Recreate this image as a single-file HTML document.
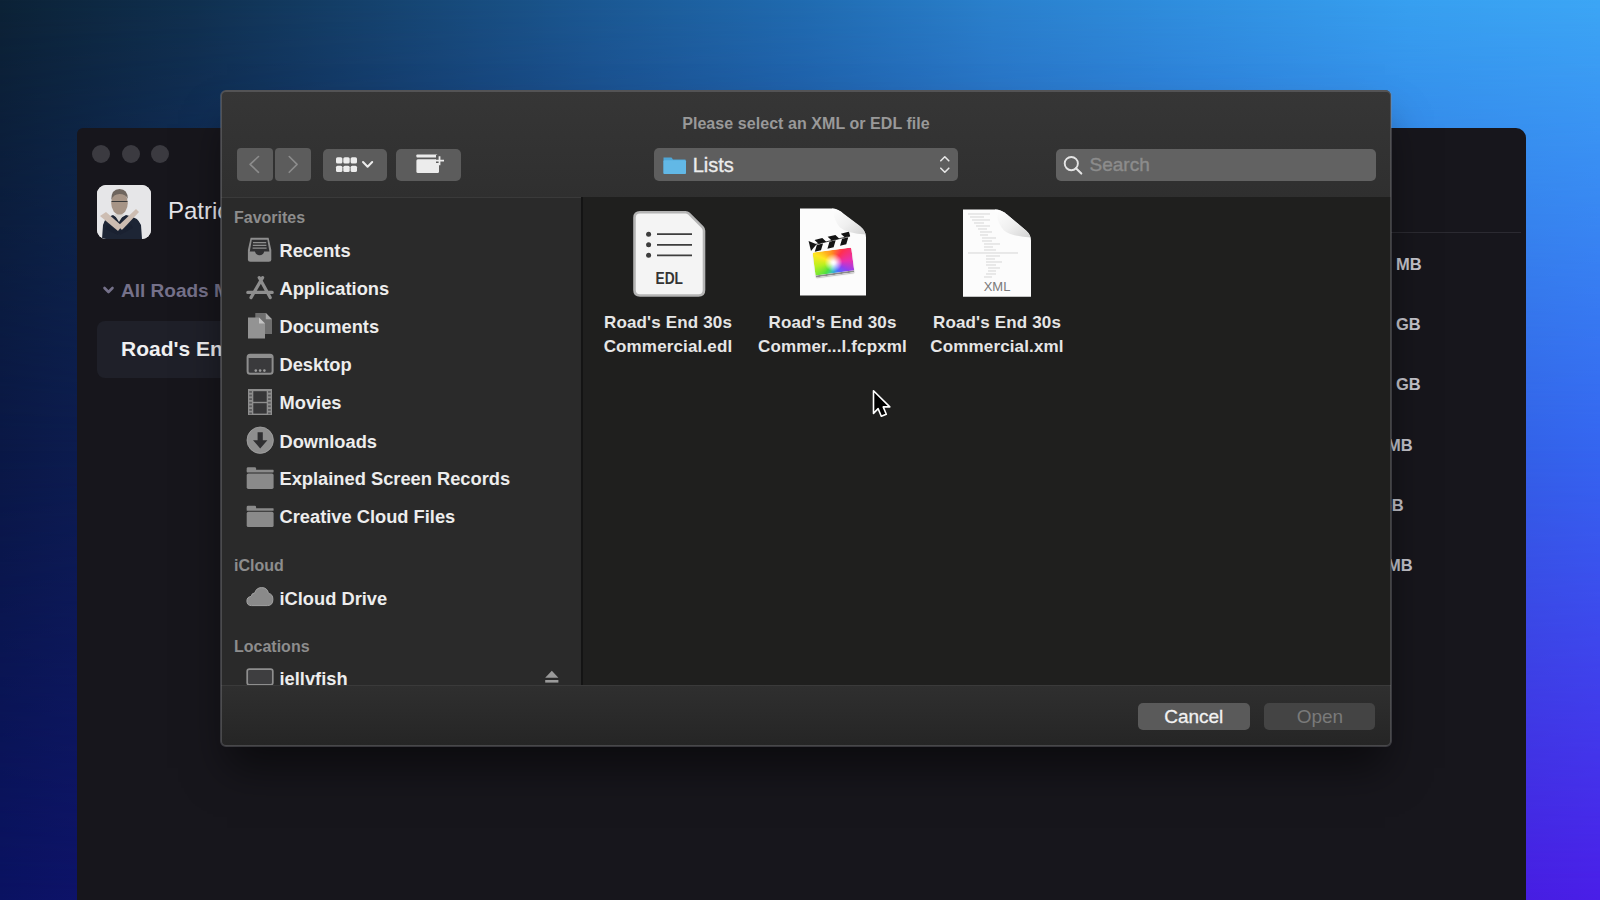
<!DOCTYPE html>
<html><head><meta charset="utf-8">
<style>
*{margin:0;padding:0;box-sizing:border-box}
html,body{width:1600px;height:900px;overflow:hidden}
body{position:relative;font-family:"Liberation Sans",sans-serif;
background:#0c1a33;}
.abs{position:absolute}
#bg1{left:0;top:0;width:1600px;height:900px;
background:linear-gradient(90deg,#0c2236 0%,#10304f 12%,#164572 25%,#1b5892 37%,#206bb0 50%,#2a80cc 62%,#3090e0 75%,#37a0f0 88%,#3ca6f5 100%);}
#bg2{left:0;top:0;width:1600px;height:900px;
background:linear-gradient(90deg,#0a1846 0%,#3565f0 100%);
-webkit-mask-image:linear-gradient(180deg,transparent 0%,#000 50%,#000 100%);}
#bg3{left:0;top:0;width:1600px;height:900px;
background:linear-gradient(90deg,#0a1262 0%,#4a1ee8 100%);
-webkit-mask-image:linear-gradient(180deg,transparent 50%,#000 100%);}
#win{left:77px;top:128px;width:1449px;height:800px;background:#17161c;border-radius:6px 10px 0 0;}
.tl{width:18px;height:18px;border-radius:50%;background:#3b3a40;top:145px}
#dlg{left:221px;top:90px;width:1170px;height:656px;border-radius:6px;
box-shadow:0 28px 40px -6px rgba(0,0,0,.5);overflow:hidden;background:#2e2e2e}
#tb{left:0;top:0;width:1170px;height:107px;background:linear-gradient(#363636,#2f2f2f);}
#side{left:0;top:107px;width:360px;height:488px;background:#2a2a2a;border-top:1px solid #3a3a3a}
#files{left:362px;top:107px;width:808px;height:488px;background:#1f1f1e}
#divv{left:360px;top:107px;width:2px;height:488px;background:#141414}
#foot{left:0;top:595px;width:1170px;height:61px;background:linear-gradient(#2f2f2f,#252525);border-top:1px solid #3a3a3a}
.bgt{font-size:16.5px;line-height:16.5px;font-weight:700;color:#c4c4cc;white-space:nowrap}
.btn{background:#5c5c5c;border-radius:6px;}
.sh{color:#8d8d8d;font-size:16px;line-height:16px;font-weight:700;left:13px}
.si{color:#ededed;font-size:18.3px;line-height:19.5px;font-weight:700;left:58.5px;margin-top:0.4px;white-space:nowrap}
.ft{color:#e6e6e6;font-size:17px;font-weight:700;letter-spacing:0.15px;text-align:center;white-space:nowrap;line-height:23.5px}
</style></head><body>
<div id="bg1" class="abs"></div>
<div id="bg2" class="abs"></div>
<div id="bg3" class="abs"></div>

<div id="win" class="abs"></div>
<div class="abs" style="left:97px;top:185px;width:54px;height:54px;border-radius:9px;overflow:hidden;background:#e9e9ea">
  <svg width="54" height="54" viewBox="97 185 54 54">
    <rect x="97" y="185" width="54" height="54" fill="#e6e6e8"/>
    <path d="M102 239l1-14q2-8 10-10l6 4l7-4q12 2 15 10l1 14z" fill="#1d2535"/>
    <path d="M114 214l5 8l5-8z" fill="#d8d4d0"/>
    <ellipse cx="119.5" cy="203" rx="8.3" ry="11.5" fill="#a69486"/>
    <path d="M111.2 200q0-11 8.3-11q8.3 0 8.3 10q-2-5-8.3-5q-6 0-8.3 6z" fill="#6e655e"/>
    <path d="M111.5 201.5h16" stroke="#3a3a3a" stroke-width="1"/>
    <path d="M100 216l6-4l16 14l-4 5z" fill="#cdbdb2"/>
    <path d="M136 209l3 3l-17 18l-4-4z" fill="#cdbdb2"/>
    <path d="M107 225l12 7l-1 3l-13-6zM131 224l-12 8l1 3l13-7z" fill="#1a2131"/>
  </svg>
</div>
<div class="abs" style="left:168px;top:198.7px;font-size:24px;line-height:24px;color:#e6e6ea;white-space:nowrap">Patrick</div>
<svg class="abs" style="left:0;top:0" width="240" height="320" viewBox="0 0 240 320">
  <polyline points="104.5,288 108.5,292 112.5,288" fill="none" stroke="#75718a" stroke-width="2.6" stroke-linecap="round" stroke-linejoin="round"/>
</svg>
<div class="abs" style="left:121px;top:281px;font-size:19px;line-height:19px;font-weight:700;color:#75718a;white-space:nowrap">All Roads Media</div>
<div class="abs" style="left:97px;top:321px;width:300px;height:57px;border-radius:8px;background:#1f2029"></div>
<div class="abs" style="left:121px;top:337.5px;font-size:21px;line-height:22px;color:#f0f0f2;font-weight:700;white-space:nowrap">Road's End</div>
<div class="abs" style="left:1391px;top:231.5px;width:130px;height:1.5px;background:#2b2a31"></div>
<div class="abs bgt" style="left:1396px;top:256.2px">MB</div>
<div class="abs bgt" style="left:1396px;top:316.2px">GB</div>
<div class="abs bgt" style="left:1396px;top:376.2px">GB</div>
<div class="abs bgt" style="left:1387px;top:436.6px">MB</div>
<div class="abs bgt" style="left:1379px;top:496.5px">GB</div>
<div class="abs bgt" style="left:1387px;top:556.9px">MB</div>
<div class="abs tl" style="left:92px"></div>
<div class="abs tl" style="left:122px"></div>
<div class="abs tl" style="left:151px"></div>

<div id="dlg" class="abs">
  <div id="tb" class="abs">
    <div class="abs" style="left:0;top:25.8px;width:1170px;text-align:center;font-size:16px;line-height:16px;font-weight:700;letter-spacing:0.06px;color:#999999">Please select an XML or EDL file</div>
    <div class="abs btn" style="left:15.5px;top:58.4px;width:36.2px;height:32.3px;border-radius:4px"></div>
    <div class="abs btn" style="left:54px;top:58.4px;width:36px;height:32.3px;border-radius:4px"></div>
    <svg class="abs" style="left:0;top:0" width="400" height="107" viewBox="221 90 400 107">
      <polyline points="258.5,156.5 250.1,164.4 258.5,172.3" fill="none" stroke="#8c8c8c" stroke-width="1.6" stroke-linecap="round" stroke-linejoin="round"/>
      <polyline points="289.2,156.5 297.1,164.4 289.2,172.3" fill="none" stroke="#8c8c8c" stroke-width="1.6" stroke-linecap="round" stroke-linejoin="round"/>
    </svg>
    <div class="abs btn" style="left:101.7px;top:58.5px;width:64.5px;height:32px;border-radius:5px"></div>
    <div class="abs btn" style="left:175.3px;top:58.5px;width:64.3px;height:32px;border-radius:5px"></div>
    <svg class="abs" style="left:0;top:0" width="400" height="107" viewBox="221 90 400 107">
      <g fill="#ececec">
        <rect x="336" y="157.2" width="6.4" height="6.4" rx="1.6"/><rect x="343.3" y="157.2" width="6.4" height="6.4" rx="1.6"/><rect x="350.6" y="157.2" width="6.4" height="6.4" rx="1.6"/>
        <rect x="336" y="165.7" width="6.4" height="6.4" rx="1.6"/><rect x="343.3" y="165.7" width="6.4" height="6.4" rx="1.6"/><rect x="350.6" y="165.7" width="6.4" height="6.4" rx="1.6"/>
      </g>
      <polyline points="363,162 367.6,166.8 372.2,162" fill="none" stroke="#ececec" stroke-width="2" stroke-linecap="round" stroke-linejoin="round"/>
      <g fill="#ececec">
        <rect x="416.4" y="154.5" width="21" height="3" rx="0.8"/>
        <rect x="416.4" y="159.2" width="22.6" height="13.8" rx="1.5"/>
      </g>
      <rect x="436" y="155" width="8" height="8" fill="#5c5c5c"/>
      <path d="M439.5 156.2v9M435 160.7h9" stroke="#ececec" stroke-width="1.8"/>
    </svg>
    <div class="abs btn" style="left:433.4px;top:58.4px;width:303.3px;height:32.3px;border-radius:5px;background:#5e5e5e"></div>
    <svg class="abs" style="left:0;top:0" width="1170" height="107" viewBox="221 90 1170 107">
      <path d="M663.5 157.5h8l1.5 2h12.5v13.6q0 1-1 1h-20q-1 0-1-1z" fill="#4fa6d6"/>
      <rect x="663.5" y="160.2" width="22.5" height="13.8" rx="1" fill="#62b8e6"/>
      <polyline points="940.8,160.8 944.8,156.8 948.8,160.8" fill="none" stroke="#e6e6e6" stroke-width="1.6" stroke-linecap="round" stroke-linejoin="round"/>
      <polyline points="940.8,168.2 944.8,172.2 948.8,168.2" fill="none" stroke="#e6e6e6" stroke-width="1.6" stroke-linecap="round" stroke-linejoin="round"/>
    </svg>
    <div class="abs" style="left:471.7px;top:65.2px;font-size:20px;line-height:20px;color:#ececec;-webkit-text-stroke:0.35px #ececec">Lists</div>
    <div class="abs btn" style="left:834.8px;top:58.6px;width:320px;height:32.2px;border-radius:5px;background:#626262"></div>
    <svg class="abs" style="left:0;top:0" width="1170" height="107" viewBox="221 90 1170 107">
      <circle cx="1071.3" cy="163.6" r="6.6" fill="none" stroke="#e4e4e4" stroke-width="1.9"/>
      <path d="M1076 168.3l5.3 5.3" stroke="#e4e4e4" stroke-width="2.1" stroke-linecap="round"/>
    </svg>
    <div class="abs" style="left:868.5px;top:64.8px;font-size:19px;line-height:20px;color:#8c8c8c;-webkit-text-stroke:0.4px #8c8c8c">Search</div>
  </div>
  <div id="side" class="abs"></div>
  <div id="divv" class="abs"></div>
  <div id="files" class="abs"></div>
  <svg class="abs" style="left:0;top:0" width="1170" height="656" viewBox="221 90 1170 656">
    <!-- EDL -->
    <path d="M640 212.2h45.5q2 0 3.5 1.5l13.5 13.5q1.5 1.5 1.5 3.5v59.3q0 5.5-5.5 5.5h-58.5q-5.5 0-5.5-5.5v-72.3q0-5.5 5.5-5.5z" fill="#f4f4f4" stroke="#b4b4b4" stroke-width="2.6"/>
        <g fill="#3d3d3d"><circle cx="648.6" cy="234.2" r="2.5"/><circle cx="648.6" cy="244.8" r="2.5"/><circle cx="648.6" cy="255.3" r="2.5"/></g>
    <g stroke="#3d3d3d" stroke-width="1.7"><path d="M657 234.2h35M657 244.8h35M657 255.3h35"/></g>
    <text x="655.5" y="284.2" font-family="Liberation Sans" font-size="16.5" font-weight="700" fill="#333333" textLength="27.5" lengthAdjust="spacingAndGlyphs">EDL</text>
    <!-- FCP page -->
    <defs>
      <linearGradient id="curl" x1="0" y1="0" x2="1" y2="1">
        <stop offset="0" stop-color="#ffffff"/><stop offset="0.5" stop-color="#efefef"/><stop offset="1" stop-color="#cfcfcf"/>
      </linearGradient>
    </defs>
    <path d="M800 208.5h32q6 0 12 6l16 12q6 5 6 11v57.9h-66z" fill="#fcfcfc"/>
    <path d="M832 208.5q3 14 8 19q7 6 26 7v2.5q0-6-6-11l-16-12q-6-5.5-12-5.5z" fill="url(#curl)"/>
    <!-- XML page -->
    <path d="M963 209.4h32q6 0 12 5l19 16q5 4.5 5 10v56.3h-68z" fill="#fcfcfc"/>
    <path d="M995 209.4q3 15 9 21q7 6 27 7v3q0-5.5-5-10l-19-16q-6-5-12-5z" fill="url(#curl)"/>
    <g stroke="#c4c4c4" stroke-width="0.7">
      <path d="M968 214h22M970 217h14M972 220h18M974 223h10M976 226h14M978 229h9M980 232h12M980 235h8M982 238h14M982 241h10M984 244h16M984 247h9M984 250h12M968 253h50M986 256h14M986 259h9M986 262h16M986 265h10M988 268h12M988 271h8M986 274h10M984 277h8"/>
    </g>
    <text x="997" y="291.4" text-anchor="middle" font-family="Liberation Sans" font-size="13" fill="#7a7a7a">XML</text>
  </svg>
  <svg class="abs" style="left:0;top:0" width="1170" height="656" viewBox="221 90 1170 656">
    <g transform="translate(1.5 4) rotate(-13.5 810 247)">
      <path d="M811 241.5h40" stroke="#2a2a2a" stroke-width="0.8"/>
      <path d="M815.5 237h8l3 4.5h-8zM829 237h8l3 4.5h-8zM842.5 237h8l0.5 0.8v3.7h-5.5z" fill="#141414"/>
      <path d="M809.5 236.5l7 5l-7 5.5z" fill="#141414"/>
      <path d="M813 248.5l3.6-6.2h6.4l-3.6 6.2zM826 248.5l3.6-6.2h6.4l-3.6 6.2zM839 248.5l3.6-6.2h6.4l-3.6 6.2z" fill="#141414"/>
    </g>
  </svg>
  <div class="abs" style="left:592.7px;top:160px;width:38.5px;height:25px;transform:rotate(-7.5deg);border-radius:1.5px;border-bottom:2px solid #8a8a8a;box-shadow:0 1px 1px rgba(0,0,0,.25);background:radial-gradient(circle at 50% 55%,#ffffff 0,rgba(255,255,255,.9) 8%,rgba(255,255,255,0) 38%),conic-gradient(from 0deg at 50% 55%,#ff8a20,#ff3050 45deg,#e830b0 90deg,#9040f0 125deg,#4a70ff 160deg,#38c0c0 195deg,#50e040 225deg,#b8f020 265deg,#ffe820 300deg,#ffb020 330deg,#ff8a20 360deg)"></div>
  <div class="abs ft" style="left:347px;top:221.4px;width:200px">Road's End 30s<br>Commercial.edl</div>
  <div class="abs ft" style="left:511.5px;top:221.4px;width:200px">Road's End 30s<br>Commer...l.fcpxml</div>
  <div class="abs ft" style="left:676px;top:221.4px;width:200px">Road's End 30s<br>Commercial.xml</div>
  <svg class="abs" style="left:0;top:0" width="1170" height="656" viewBox="221 90 1170 656">
    <path d="M873.5 390.8v22.6l4.6-4.8l3.2 7.6l5-2l-3.1-7.3h6.6z" fill="#000" stroke="#fff" stroke-width="1.6" stroke-linejoin="round"/>
  </svg>
  <div class="abs" style="left:0;top:0;width:360px;height:595px;overflow:hidden">
    <div class="abs sh" style="top:119.8px">Favorites</div>
    <div class="abs si" style="top:150.5px">Recents</div>
    <div class="abs si" style="top:188.8px">Applications</div>
    <div class="abs si" style="top:226.8px">Documents</div>
    <div class="abs si" style="top:264.6px">Desktop</div>
    <div class="abs si" style="top:302.8px">Movies</div>
    <div class="abs si" style="top:341.3px">Downloads</div>
    <div class="abs si" style="top:379.1px">Explained Screen Records</div>
    <div class="abs si" style="top:416.8px">Creative Cloud Files</div>
    <div class="abs sh" style="top:467.5px">iCloud</div>
    <div class="abs si" style="top:498.3px">iCloud Drive</div>
    <div class="abs sh" style="top:548.5px">Locations</div>
    <div class="abs si" style="top:579px">iellvfish</div>
    <svg class="abs" style="left:0;top:0" width="360" height="595" viewBox="221 90 360 595">
      <!-- recents -->
      <path d="M250.6 237.7h18l2.7 12.2v9.3q0 2.5-2.5 2.5h-18.4q-2.5 0-2.5-2.5v-9.3z" fill="#8e8e8e"/>
      <path d="M251.8 239.8h15.6l2 11.6h-5.2q-1 3.8-4.6 3.8t-4.6-3.8h-5.2z" fill="#2f2f31"/>
      <g stroke="#8e8e8e" stroke-width="1.3"><path d="M253 242.6h13.2M252.8 245.4h13.6M252.6 248.2h14"/></g>
      <!-- applications -->
      <g stroke="#8e8e8e" stroke-width="3.2" stroke-linecap="round" fill="none">
        <path d="M259.2 277.6L270.2 297.6M262.6 277.6L251 297.6M247.8 292.4h24.4"/>
      </g>
      <!-- documents -->
      <path d="M255.3 313h10.5l6.2 6.2v14.8h-16.7z" fill="#6e6e6e"/>
      <path d="M265.8 313v6.2h6.2z" fill="#a8a8a8"/>
      <path d="M248 317.5h11l6 6v15.1h-17z" fill="#939393"/>
      <path d="M259 317.5v6h6z" fill="#c4c4c4"/>
      <!-- desktop -->
      <rect x="247.6" y="354.7" width="25" height="19" rx="2.5" fill="#3a3a3c" stroke="#8e8e8e" stroke-width="2"/>
      <rect x="247.6" y="354.7" width="25" height="3.2" rx="1.5" fill="#8e8e8e"/>
      <g fill="#9a9a9a"><circle cx="255.8" cy="370.6" r="1.3"/><circle cx="260.1" cy="370.6" r="1.3"/><circle cx="264.4" cy="370.6" r="1.3"/></g>
      <!-- movies -->
      <rect x="248" y="389" width="24" height="26" fill="#8e8e8e"/>
      <rect x="253.3" y="391.2" width="13.4" height="10.6" fill="#363638"/>
      <rect x="253.3" y="403.2" width="13.4" height="10.4" fill="#363638"/>
      <g fill="#5a5a5c">
        <rect x="249.3" y="391" width="2.6" height="1.8"/><rect x="249.3" y="394.6" width="2.6" height="1.8"/><rect x="249.3" y="398.2" width="2.6" height="1.8"/><rect x="249.3" y="401.8" width="2.6" height="1.8"/><rect x="249.3" y="405.4" width="2.6" height="1.8"/><rect x="249.3" y="409" width="2.6" height="1.8"/><rect x="249.3" y="412.4" width="2.6" height="1.8"/>
        <rect x="268.1" y="391" width="2.6" height="1.8"/><rect x="268.1" y="394.6" width="2.6" height="1.8"/><rect x="268.1" y="398.2" width="2.6" height="1.8"/><rect x="268.1" y="401.8" width="2.6" height="1.8"/><rect x="268.1" y="405.4" width="2.6" height="1.8"/><rect x="268.1" y="409" width="2.6" height="1.8"/><rect x="268.1" y="412.4" width="2.6" height="1.8"/>
      </g>
      <!-- downloads -->
      <circle cx="260.2" cy="440.2" r="13.2" fill="#8e8e8e" stroke="#a4a4a4" stroke-width="0.8"/>
      <path d="M257.6 432.2h5.2v8h4.6l-7.2 8.2l-7.2-8.2h4.6z" fill="#2f2f31"/>
      <!-- folders -->
      <g fill="#8a8a8a">
        <rect x="246.7" y="467.3" width="9.4" height="4" rx="1.3"/>
        <rect x="246.7" y="469.8" width="26.9" height="2.6" rx="0.6"/>
        <rect x="246.7" y="473.4" width="26.9" height="15.5" rx="1.6"/>
        <rect x="246.7" y="505.7" width="9.4" height="4" rx="1.3"/>
        <rect x="246.7" y="508.2" width="26.9" height="2.6" rx="0.6"/>
        <rect x="246.7" y="511.8" width="26.9" height="15.2" rx="1.6"/>
      </g>
      <!-- cloud -->
      <path d="M251.5 605.6q-4.6 0-4.6-4.6q0-4.2 4.3-4.6q0.4-3.2 3.6-3.6q1.6-5.2 6.8-5.2q5.8 0 6.9 5.8q4.4 0.6 4.4 6q0 6.2-5.6 6.2z" fill="#8a8a8a" stroke="#a2a2a2" stroke-width="1"/>
      <!-- drive -->
      <rect x="247.2" y="669.1" width="25.6" height="15.8" rx="2.2" fill="#3e3e40" stroke="#8e8e8e" stroke-width="1.7"/>
      <!-- eject -->
      <path d="M551.8 670.8l6.6 7h-13.2z" fill="#9a9a9a"/>
      <rect x="545.2" y="680" width="13.2" height="2.6" fill="#9a9a9a"/>
    </svg>
  </div>
  <div id="foot" class="abs"></div>
  <div class="abs btn" style="left:917px;top:612.8px;width:111.5px;height:27.6px;border-radius:5px;background:#5a5a5a"></div>
  <div class="abs" style="left:917px;top:616.8px;width:111.5px;text-align:center;font-size:19px;line-height:19px;color:#f2f2f2;-webkit-text-stroke:0.3px #f2f2f2">Cancel</div>
  <div class="abs btn" style="left:1043.4px;top:612.8px;width:111px;height:27.6px;border-radius:5px;background:#444444"></div>
  <div class="abs" style="left:1043.4px;top:616.8px;width:111px;text-align:center;font-size:19px;line-height:19px;color:#7a7a7a">Open</div>
</div>
<div class="abs" style="left:220px;top:89.5px;width:1172px;height:657px;border-radius:6px;border:2px solid rgba(140,140,146,.34)"></div>
</body></html>
